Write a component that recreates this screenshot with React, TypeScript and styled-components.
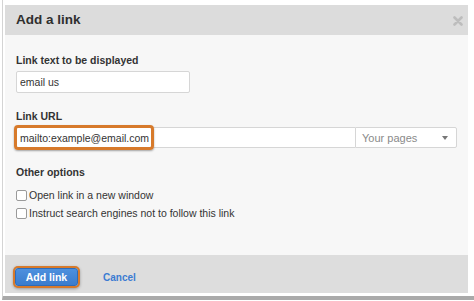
import React from "react";
import styled, { createGlobalStyle } from "styled-components";

const Global = createGlobalStyle`
  html, body {
    margin: 0;
    padding: 0;
    background: #fff;
  }
  body {
    font-family: "Liberation Sans", Arial, sans-serif;
    color: #333;
  }
`;

const CloseIcon = () => (
  <svg width="10" height="10" viewBox="0 0 10 10">
    <path d="M1.5 1.5 L8.5 8.5 M8.5 1.5 L1.5 8.5" stroke="currentColor" strokeWidth="2.6" strokeLinecap="round" />
  </svg>
);

const App = () => {
  return (
    <>
      <Global />
      <Frame>
        <Dialog>
          <Header>
            <Title>Add a link</Title>
            <Close>
              <CloseIcon />
            </Close>
          </Header>

          <Body>
            <Label>Link text to be displayed</Label>
            <TextInput defaultValue="email us" />

            <Label>Link URL</Label>
            <UrlRow>
              <UrlField>
                <UrlInput defaultValue="mailto:example@email.com" />
                <Highlight />
              </UrlField>
              <Select>
                <span>Your pages</span>
                <Caret />
              </Select>
            </UrlRow>

            <Label>Other options</Label>
            <Option>
              <Check type="checkbox" />
              Open link in a new window
            </Option>
            <Option>
              <Check type="checkbox" />
              Instruct search engines not to follow this link
            </Option>
          </Body>

          <Footer>
            <PrimaryButton>Add link</PrimaryButton>
            <CancelLink>Cancel</CancelLink>
          </Footer>
        </Dialog>
      </Frame>
    </>
  );
};

export default App;

const Frame = styled.div`
  margin-left: 2px;
  width: 467px;
  padding: 5px 3px 3px 2px;
  border-left: 1px solid #d4d4d4;
  border-right: 1px solid #d4d4d4;
  border-bottom: 4px solid #a9a9a9;
  background: #fff;
`;

const Dialog = styled.div`
  display: flex;
  flex-direction: column;
  width: 463px;
`;

const Header = styled.div`
  height: 30px;
  background: #dcdcdc;
  display: flex;
  align-items: center;
  justify-content: space-between;
  padding: 0 5px 0 11px;
`;

const Title = styled.div`
  font-size: 13.5px;
  font-weight: bold;
  color: #2f2f2f;
  margin-top: -1px;
`;

const Close = styled.div`
  display: flex;
  color: #bdbdbd;
  margin-top: 2px;
`;

const Body = styled.div`
  box-sizing: border-box;
  background: #f7f7f7;
  height: 220px;
  padding: 19px 11px 0 11px;
  display: flex;
  flex-direction: column;
  align-items: flex-start;
`;

const Label = styled.div`
  font-size: 10.5px;
  font-weight: bold;
  color: #333;
  line-height: 13px;
  margin-bottom: 4px;
`;

const TextInput = styled.input`
  box-sizing: border-box;
  width: 174px;
  height: 22px;
  border: 1px solid #d6d6d6;
  border-radius: 2px;
  background: #fff;
  padding: 0 3px;
  font-family: "Liberation Sans", Arial, sans-serif;
  font-size: 10.5px;
  color: #333;
  margin-bottom: 17px;
  outline: none;
`;

const UrlRow = styled.div`
  display: flex;
  margin-bottom: 18px;
`;

const UrlField = styled.div`
  position: relative;
`;

const UrlInput = styled.input`
  box-sizing: border-box;
  width: 339px;
  height: 21px;
  border: 1px solid #d6d6d6;
  border-right: none;
  background: #fff;
  padding: 0 3px;
  font-family: "Liberation Sans", Arial, sans-serif;
  font-size: 10.5px;
  color: #333;
  outline: none;
  display: block;
`;

const Highlight = styled.div`
  position: absolute;
  left: -2px;
  top: -2px;
  width: 140px;
  height: 25px;
  box-sizing: border-box;
  border: 3px solid #d77a2b;
  border-radius: 4px;
  box-shadow: 0 1px 2px rgba(0, 0, 0, 0.35);
`;

const Select = styled.div`
  box-sizing: border-box;
  width: 102px;
  height: 21px;
  border: 1px solid #d6d6d6;
  border-radius: 0 2px 2px 0;
  background: #fff;
  display: flex;
  align-items: center;
  justify-content: space-between;
  padding: 0 8px 0 6px;
  font-size: 11px;
  color: #8a8a8a;
`;

const Caret = styled.span`
  width: 0;
  height: 0;
  border-left: 3.5px solid transparent;
  border-right: 3.5px solid transparent;
  border-top: 4px solid #777;
`;

const Option = styled.label`
  display: flex;
  align-items: center;
  font-size: 10.5px;
  color: #333;
  height: 18px;
  &:first-of-type {
    margin-top: 3px;
  }
`;

const Check = styled.input`
  appearance: none;
  box-sizing: border-box;
  width: 11px;
  height: 11px;
  margin: 0 2px 0 0;
  border: 1px solid #9a9a9a;
  border-radius: 2px;
  background: #fff;
`;

const Footer = styled.div`
  height: 38px;
  background: #dddddd;
  display: flex;
  align-items: center;
  padding: 6px 0 0 10px;
  box-sizing: border-box;
`;

const PrimaryButton = styled.button`
  width: 63px;
  height: 18px;
  border: 1px solid #2f6cb8;
  border-radius: 3px;
  background: linear-gradient(#4d90de, #3a7ccd);
  color: #fff;
  font-family: "Liberation Sans", Arial, sans-serif;
  font-size: 10.5px;
  font-weight: bold;
  padding: 0;
  box-shadow: 0 0 0 2px #d77a2b, 0 1px 3px 2px rgba(0, 0, 0, 0.3);
`;

const CancelLink = styled.a`
  margin-left: 25px;
  font-size: 10px;
  font-weight: bold;
  color: #3b7bd2;
`;
